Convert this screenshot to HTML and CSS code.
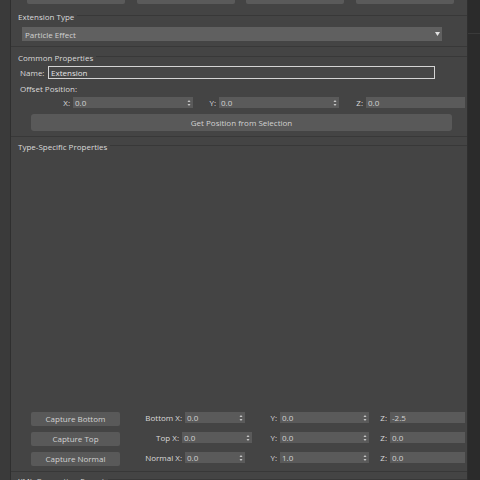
FILE: index.html
```html
<!DOCTYPE html>
<html>
<head>
<meta charset="utf-8">
<link rel="stylesheet" href="styles.css">
</head>
<body>
<div class="lstrip"></div>
<div class="panel">
  <div class="toprow">
    <div class="tbtn"></div><div class="tbtn"></div><div class="tbtn"></div><div class="tbtn"></div>
  </div>

  <div class="grp g1">
    <div class="ghead"><span class="gtitle">Extension Type</span></div>
    <div class="select">
      <span>Particle Effect</span>
      <svg class="darrow" width="5" height="4" viewBox="0 0 5 4"><polygon points="0,0 5,0 2.5,4" fill="#e2e2e2"/></svg>
    </div>
  </div>

  <div class="grp g2">
    <div class="ghead"><span class="gtitle">Common Properties</span></div>
    <div class="namerow">
      <span class="namelbl">Name:</span>
      <div class="textin">Extension</div>
    </div>
    <div class="sublbl">Offset Position:</div>
    <div class="xyz">
      <span class="lbl l1">X:</span>
      <div class="spin w120"><span>0.0</span><svg width="4" height="8" viewBox="0 0 4 8"><polygon points="0.5,3 2,1 3.5,3" fill="#c8c8c8"/><polygon points="0.5,5 2,7 3.5,5" fill="#c8c8c8"/></svg></div>
      <span class="lbl l2">Y:</span>
      <div class="spin w120"><span>0.0</span><svg width="4" height="8" viewBox="0 0 4 8"><polygon points="0.5,3 2,1 3.5,3" fill="#c8c8c8"/><polygon points="0.5,5 2,7 3.5,5" fill="#c8c8c8"/></svg></div>
      <span class="lbl l3">Z:</span>
      <div class="spin w99"><span>0.0</span></div>
    </div>
    <div class="btn wide">Get Position from Selection</div>
  </div>

  <div class="grp g3">
    <div class="ghead"><span class="gtitle">Type-Specific Properties</span></div>
    <div class="tbody">
      <div class="crow">
        <div class="btn cap">Capture Bottom</div>
        <span class="lbl cx">Bottom X:</span>
        <div class="spin cxin"><span>0.0</span><svg width="4" height="8" viewBox="0 0 4 8"><polygon points="0.5,3 2,1 3.5,3" fill="#c8c8c8"/><polygon points="0.5,5 2,7 3.5,5" fill="#c8c8c8"/></svg></div>
        <span class="lbl cy">Y:</span>
        <div class="spin cyin"><span>0.0</span><svg width="4" height="8" viewBox="0 0 4 8"><polygon points="0.5,3 2,1 3.5,3" fill="#c8c8c8"/><polygon points="0.5,5 2,7 3.5,5" fill="#c8c8c8"/></svg></div>
        <span class="lbl cz">Z:</span>
        <div class="spin czin"><span>-2.5</span></div>
      </div>
      <div class="crow r2">
        <div class="btn cap">Capture Top</div>
        <span class="lbl cx">Top X:</span>
        <div class="spin cxin"><span>0.0</span><svg width="4" height="8" viewBox="0 0 4 8"><polygon points="0.5,3 2,1 3.5,3" fill="#c8c8c8"/><polygon points="0.5,5 2,7 3.5,5" fill="#c8c8c8"/></svg></div>
        <span class="lbl cy">Y:</span>
        <div class="spin cyin"><span>0.0</span><svg width="4" height="8" viewBox="0 0 4 8"><polygon points="0.5,3 2,1 3.5,3" fill="#c8c8c8"/><polygon points="0.5,5 2,7 3.5,5" fill="#c8c8c8"/></svg></div>
        <span class="lbl cz">Z:</span>
        <div class="spin czin"><span>0.0</span></div>
      </div>
      <div class="crow">
        <div class="btn cap">Capture Normal</div>
        <span class="lbl cx">Normal X:</span>
        <div class="spin cxin"><span>0.0</span><svg width="4" height="8" viewBox="0 0 4 8"><polygon points="0.5,3 2,1 3.5,3" fill="#c8c8c8"/><polygon points="0.5,5 2,7 3.5,5" fill="#c8c8c8"/></svg></div>
        <span class="lbl cy">Y:</span>
        <div class="spin cyin"><span>1.0</span><svg width="4" height="8" viewBox="0 0 4 8"><polygon points="0.5,3 2,1 3.5,3" fill="#c8c8c8"/><polygon points="0.5,5 2,7 3.5,5" fill="#c8c8c8"/></svg></div>
        <span class="lbl cz">Z:</span>
        <div class="spin czin"><span>0.0</span></div>
      </div>
    </div>
  </div>

  <div class="grp g4">
    <div class="ghead"><span class="gtitle">XML Generation Export</span></div>
  </div>
</div>
<div class="rstrip"><div class="rs-top"></div></div>
</body>
</html>
```

FILE: styles.css
```css
* { box-sizing: border-box; }
html, body { margin: 0; padding: 0; }
body {
  width: 480px;
  height: 480px;
  overflow: hidden;
  display: flex;
  background: #2b2b2b;
  font-family: "Open Sans", "Noto Sans", sans-serif;
  font-size: 8px;
  color: #dadada;
}
.lstrip { width: 10px; flex: none; background: #3a3a3a; }
.panel {
  width: 458px;
  flex: none;
  height: 480px;
  overflow: hidden;
  background: #444444;
  border-left: 1px solid #2f2f2f;
  border-right: 1px solid #2f2f2f;
  display: flex;
  flex-direction: column;
}
.panel > * { flex: none; }
.rstrip { flex: 1; background: #2b2b2b; }
.rs-top { height: 34px; border-bottom: 1px solid #3a3a3a; }

.toprow {
  display: flex;
  justify-content: space-between;
  height: 4px;
  margin: 0 13px 0 16px;
}
.tbtn { width: 98px; height: 4px; background: #5a5a5a; border-radius: 0 0 2px 2px; }

.grp { border-bottom: 1px solid #383838; padding-bottom: 5px; }
.g1 { margin-top: 7px; }
.g2 { margin-top: 5px; }
.g3 { margin-top: 4px; padding-bottom: 5px; }
.g4 { margin-top: 3px; }
.ghead { display: flex; height: 11px; }
.gtitle { line-height: 11px; padding-left: 7px; padding-right: 3px; white-space: nowrap; }
.ghead::after { content: ""; flex: 1; height: 1px; margin-top: 4px; background: #383838; }

.select {
  margin: 5px 0 0 11px;
  width: 420px;
  height: 14px;
  background: #606060;
  display: flex;
  align-items: center;
  justify-content: space-between;
  padding: 0 2px 0 3px;
  color: #d2d2d2;
}

.namerow { display: flex; align-items: center; margin-top: 3px; height: 13px; padding-left: 9px; }
.namelbl { width: 28px; }
.textin {
  width: 387px;
  height: 13px;
  border: 1px solid #d4d4d4;
  background: #464646;
  padding-left: 2px;
  line-height: 11px;
  color: #e4e4e4;
}
.sublbl { margin-top: 4px; height: 11px; line-height: 11px; padding-left: 9px; }

.xyz { display: flex; margin-top: 3px; height: 11px; }
.lbl { text-align: right; line-height: 11px; margin-right: 3px; white-space: nowrap; flex: none; }
.l1 { width: 59px; }
.l2 { width: 23px; }
.l3 { width: 24px; }
.spin {
  flex: none;
  height: 11px;
  background: #5a5a5a;
  display: flex;
  align-items: center;
  justify-content: space-between;
  padding: 0 2px 0 2px;
  line-height: 11px;
  color: #d2d2d2;
}
.w120 { width: 120px; }
.w99 { width: 99px; }

.btn {
  background: #595959;
  border-radius: 2px;
  text-align: center;
  color: #d2d2d2;
}
.wide { margin: 6px 0 0 20px; width: 421px; height: 17px; line-height: 17px; border-radius: 3px; }

.tbody { height: 314px; display: flex; flex-direction: column; justify-content: flex-end; gap: 6px; }
.crow { display: flex; align-items: flex-start; height: 14px; padding-left: 20px; }
.cap { width: 89px; height: 14px; line-height: 14px; flex: none; }
.cx { width: 62px; }
.cxin { width: 60px; }
.cy { width: 32px; }
.cyin { width: 89px; }
.cz { width: 18px; }
.czin { width: 75px; }
.r2 .cx { width: 59px; }
.r2 .cxin { width: 70px; }
.r2 .cy { width: 25px; }
```
